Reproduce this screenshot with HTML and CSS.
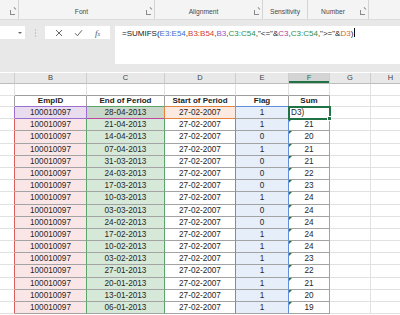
FILE: index.html
```html
<!DOCTYPE html>
<html lang="en">
<head>
    <meta charset="UTF-8">
    <meta name="viewport" content="width=device-width, initial-scale=1.0">
    <title>SUMIFS</title>
    <link rel="stylesheet" href="styles.css">
</head>
<body>
    <div class="ribbon">
        <div class="group g-clip"><span class="launcher"></span></div>
        <div class="group g-font"><span class="glabel">Font</span><span class="launcher"></span></div>
        <div class="group g-align"><span class="glabel">Alignment</span><span class="launcher"></span></div>
        <div class="group g-sens"><span class="glabel">Sensitivity</span></div>
        <div class="group g-num"><span class="glabel">Number</span><span class="launcher"></span></div>
        <div class="group g-rest"></div>
    </div>

    <div class="fbar">
        <div class="tools">
            <div class="namebox"><span class="nb-caret"></span></div>
            <div class="vdots">
                <svg width="3" height="8" viewBox="0 0 3 8"><circle cx="1.5" cy="1" r="0.6"/><circle cx="1.5" cy="4" r="0.6"/><circle cx="1.5" cy="7" r="0.6"/></svg>
            </div>
            <div class="fbtns">
                <svg width="8" height="8" viewBox="0 0 8 8"><path d="M1 1L7 7M7 1L1 7"/></svg>
                <svg width="9" height="8" viewBox="0 0 9 8"><path d="M1 4.2L3.4 6.8L8 1.2"/></svg>
                <span class="fx">f<span class="fx-x">x</span></span>
            </div>
        </div>
        <div class="formula">=SUMIFS(<span class="r-blue">E3:E54</span>,<span class="r-red">B3:B54</span>,<span class="r-purple">B3</span>,<span class="r-green">C3:C54</span>,"&lt;="&amp;<span class="r-magenta">C3</span>,<span class="r-green">C3:C54</span>,"&gt;="&amp;<span class="r-orange">D3</span>)<span class="cursor"></span></div>
    </div>

    <div class="sheet" id="sheet">
        <div class="c ch"></div>
        <div class="c ch">B</div>
        <div class="c ch">C</div>
        <div class="c ch">D</div>
        <div class="c ch">E</div>
        <div class="c ch sel">F</div>
        <div class="c ch">G</div>
        <div class="c ch">H</div>

        <div class="c"></div>
        <div class="c top"></div>
        <div class="c top"></div>
        <div class="c top"></div>
        <div class="c top"></div>
        <div class="c top"></div>
        <div class="c"></div>
        <div class="c"></div>

        <div class="c tl"></div>
        <div class="c th th-b">EmpID</div>
        <div class="c th th-c">End of Period</div>
        <div class="c th th-d">Start of Period</div>
        <div class="c th th-e">Flag</div>
        <div class="c th th-f">Sum</div>
        <div class="c"></div>
        <div class="c"></div>
    </div>

    <script>
        const rows = [
            ['28-04-2013', 1, 'D3)'],
            ['21-04-2013', 1, 21],
            ['14-04-2013', 0, 20],
            ['07-04-2013', 1, 21],
            ['31-03-2013', 0, 21],
            ['24-03-2013', 0, 22],
            ['17-03-2013', 0, 23],
            ['10-03-2013', 1, 24],
            ['03-03-2013', 0, 24],
            ['24-02-2013', 0, 24],
            ['17-02-2013', 1, 24],
            ['10-02-2013', 1, 24],
            ['03-02-2013', 1, 23],
            ['27-01-2013', 1, 22],
            ['20-01-2013', 1, 21],
            ['13-01-2013', 1, 20],
            ['06-01-2013', 1, 19]
        ];

        let html = '';
        rows.forEach((r, i) => {
            const first = i === 0 ? ' first' : '';
            html += `
                <div class="c a${first}"></div>
                <div class="c b${first}">100010097</div>
                <div class="c cc${first}">${r[0]}</div>
                <div class="c d${first}">27-02-2007</div>
                <div class="c e${first}">${r[1]}</div>
                <div class="c f${i === 0 ? ' active' : ' warn'}">${r[2]}</div>
                <div class="c"></div>
                <div class="c"></div>`;
        });
        document.getElementById('sheet').insertAdjacentHTML('beforeend', html);
    </script>
</body>
</html>
```

FILE: styles.css
```css
html, body { margin: 0; padding: 0; width: 400px; height: 315px; overflow: hidden; background: #fff; font-family: "Liberation Sans", Arial, sans-serif; }

/* ribbon */
.ribbon { display: flex; height: 20px; background: #f4f4f4; border-bottom: 1px solid #dcdcdc; box-sizing: border-box; }
.group { display: flex; align-items: flex-end; box-sizing: border-box; border-right: 1px solid #d4d4d4; padding-bottom: 3px; }
.g-clip { width: 19px; justify-content: flex-end; }
.g-font { width: 136px; }
.g-align { width: 108px; }
.g-sens { width: 45px; }
.g-num { width: 61px; }
.g-rest { flex: 1; border-right: none; }
.glabel { flex: 1; text-align: center; font-size: 6.7px; line-height: 8px; color: #4a4a4a; }
.launcher { width: 5px; height: 5px; margin: 0 3px 1px 2px; border-left: 1px solid #8a8a8a; border-bottom: 1px solid #8a8a8a; box-sizing: border-box; position: relative; }
.launcher::after { content: ""; position: absolute; right: -1px; top: -1px; width: 3px; height: 1px; background: #8a8a8a; transform: rotate(45deg); transform-origin: right; }

/* formula bar */
.fbar { display: flex; align-items: flex-start; height: 52px; padding-top: 6px; box-sizing: border-box; background: #e8e8e8; }
.tools { display: flex; align-items: center; width: 115px; }
.namebox { width: 25px; height: 13px; background: #fff; position: relative; }
.nb-caret { position: absolute; left: 18px; top: 6px; border-left: 2px solid transparent; border-right: 2px solid transparent; border-top: 2px solid #666; }
.vdots { width: 20px; display: flex; justify-content: center; }
.vdots svg { fill: #9a9a9a; }
.fbtns { width: 65px; height: 13px; background: #fff; display: flex; align-items: center; justify-content: space-around; padding: 0 4px; box-sizing: border-box; }
.fbtns svg { fill: none; stroke: #555; stroke-width: 0.9; }
.fx { font-family: "Liberation Serif", serif; font-style: italic; font-size: 9px; color: #555; }
.fx-x { font-size: 6px; }
.formula { flex: 1; height: 38px; background: #fff; padding: 2px 0 0 7px; box-sizing: border-box; font-size: 8px; line-height: 10px; color: #222; white-space: nowrap; }
.r-blue { color: #3b6fd4; }
.r-red { color: #d03c3c; }
.r-purple { color: #8a56c8; }
.r-green { color: #2f8f45; }
.r-magenta { color: #b8389c; }
.r-orange { color: #d96a1c; }
.cursor { display: inline-block; width: 1px; height: 9px; background: #111; vertical-align: -1px; margin-left: 1px; }

/* sheet */
.sheet { display: grid; grid-template-columns: 15px 72px 78px 71px 53px 41px 41px 40px; grid-template-rows: 11px 12px 11px; grid-auto-rows: 12.2px; margin-top: 1px; }
.c { border-right: 1px solid #e1e1e1; border-bottom: 1px solid #e1e1e1; box-sizing: border-box; font-size: 8.2px; line-height: 11px; text-align: center; color: #262626; white-space: nowrap; overflow: hidden; background: #fff; }
.ch { background: #e8e8e8; border-right-color: #cdcdcd; border-bottom-color: #bdbdbd; color: #444; font-size: 7.5px; line-height: 10px; }
.ch.sel { background: #d4d4d4; color: #217346; box-shadow: inset 0 -2px #217346; }
.top { border-bottom-color: #9e9e9e; }
.tl { border-right-color: #9e9e9e; }
.th { font-weight: bold; font-size: 8px; line-height: 10px; border-right-color: #9e9e9e; color: #1e1e1e; }
.th-b { border-bottom-color: #9a6fd0; }
.th-c { border-bottom-color: #5aa66a; }
.th-d { border-bottom-color: #e2843f; }
.th-e { border-bottom-color: #5f8fdc; }
.th-f { border-bottom-color: #217346; }

.a { border-right-color: #d9615d; }
.b { background: #fbe6e7; border-right-color: #5aa66a; border-bottom-color: #a3a3a3; }
.cc { background: #d6e9d9; border-right-color: #5aa66a; border-bottom-color: #a3a3a3; }
.d { border-right-color: #5f8fdc; border-bottom-color: #a3a3a3; }
.e { background: #e6eefa; border-right-color: #5f8fdc; border-bottom-color: #a3a3a3; }
.f { border-right-color: #a3a3a3; border-bottom-color: #a3a3a3; position: relative; }

.a.first { border-right-color: #9a6fd0; }
.b.first { background: #eadcef; border-right-color: #9a6fd0; border-bottom-color: #9a6fd0; }
.cc.first { background: #c9d7ca; border-right-color: #e2843f; border-bottom-color: #c0469f; }
.d.first { background: #fce9df; border-right-color: #e2843f; border-bottom-color: #e2843f; }

.f.active { text-align: left; padding-left: 2px; outline: 2px solid #217346; outline-offset: -1px; z-index: 1; overflow: visible; }
.f.active::after { content: ""; position: absolute; right: -3px; bottom: -3px; width: 3px; height: 3px; background: #217346; border: 1px solid #fff; }
.f.warn::before { content: ""; position: absolute; left: 0; top: 0; border-top: 3px solid #1f7a3c; border-right: 3px solid transparent; }
```
